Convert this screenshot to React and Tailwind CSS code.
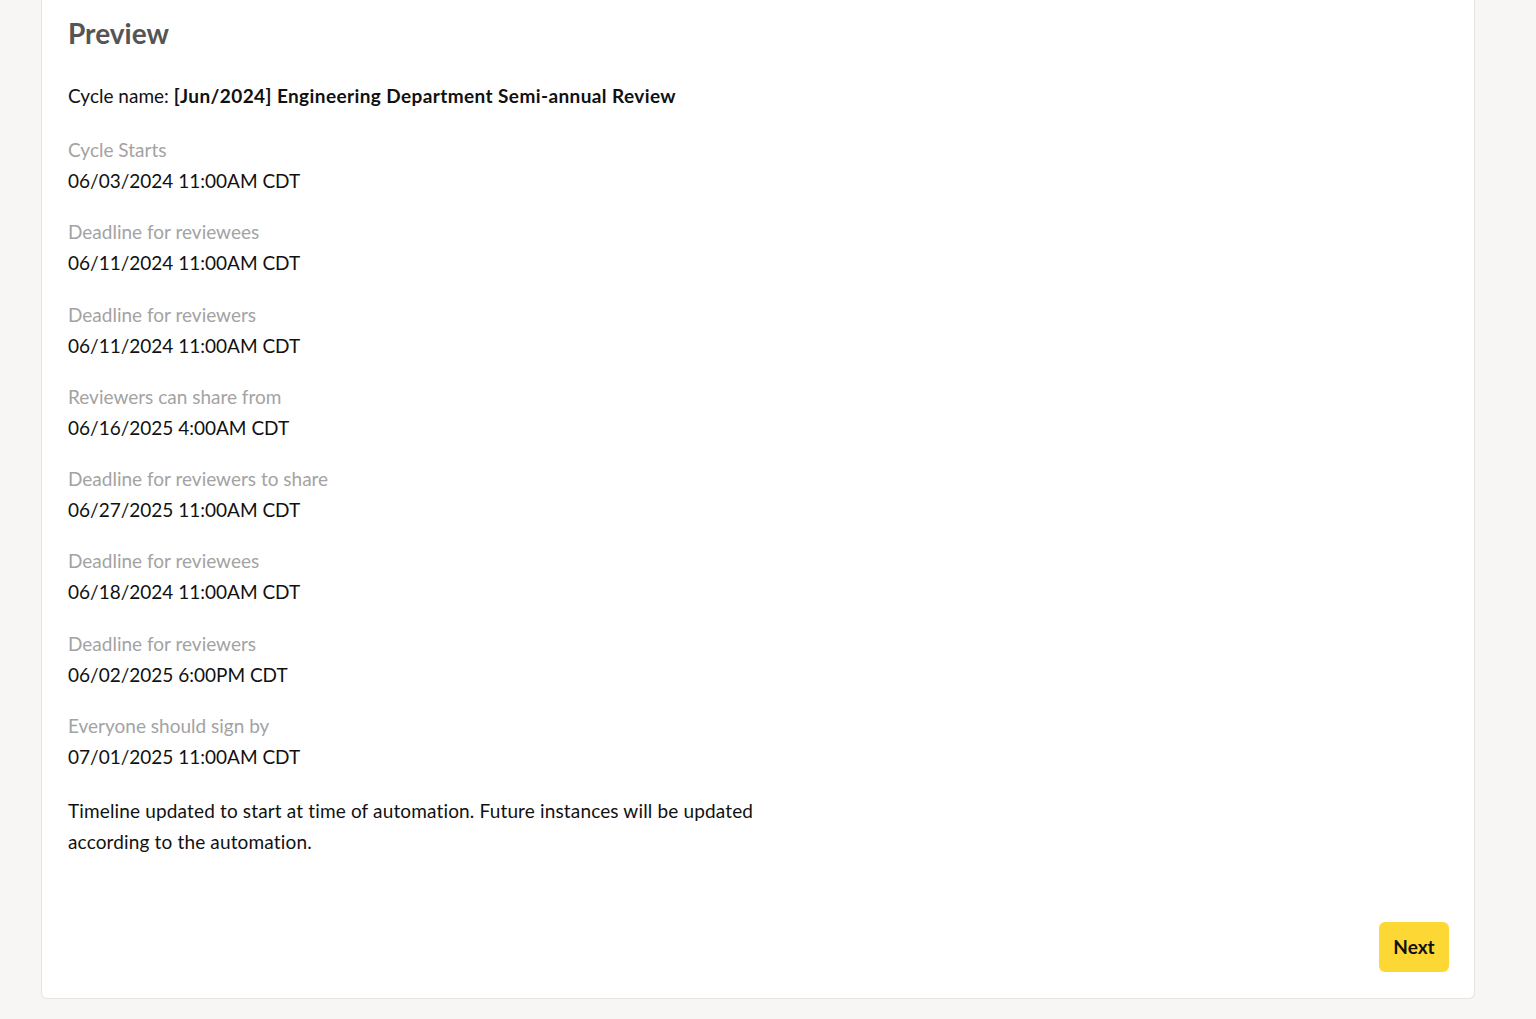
const rows = [
    { label: "Cycle Starts", value: "06/03/2024 11:00AM CDT" },
    { label: "Deadline for reviewees", value: "06/11/2024 11:00AM CDT" },
    { label: "Deadline for reviewers", value: "06/11/2024 11:00AM CDT" },
    { label: "Reviewers can share from", value: "06/16/2025 4:00AM CDT" },
    { label: "Deadline for reviewers to share", value: "06/27/2025 11:00AM CDT" },
    { label: "Deadline for reviewees", value: "06/18/2024 11:00AM CDT" },
    { label: "Deadline for reviewers", value: "06/02/2025 6:00PM CDT" },
    { label: "Everyone should sign by", value: "07/01/2025 11:00AM CDT" },
];

export default function App() {
    return (
        <div
            className="min-h-[1019px] bg-[#f7f6f4] pb-[21px]"
            style={{ fontFamily: "Lato, 'Noto Sans', sans-serif" }}
        >
            <div className="ml-[41px] w-[1434px] bg-white border border-t-0 border-[#e6e4e1] rounded-b-md pl-[26px] pr-[25px] pt-[13px] pb-[26px]">
                <h1 className="text-[28px] leading-[40px] font-bold text-[#555555]">Preview</h1>

                <p className="mt-[27px] text-[19px] leading-[31px] text-[#111111]">
                    Cycle name:{" "}
                    <span className="font-bold tracking-[0.4px]">[Jun/2024] Engineering Department Semi-annual Review</span>
                </p>

                <div className="mt-[23px] flex flex-col gap-[20.3px]">
                    {rows.map((r, i) => (
                        <div key={i}>
                            <div className="text-[19px] leading-[31px] text-[#a3a3a3]">{r.label}</div>
                            <div className="text-[19px] leading-[31px] text-[#111111]">{r.value}</div>
                        </div>
                    ))}
                </div>

                <p className="mt-[23px] w-[710px] text-[19px] leading-[31px] text-[#111111] tracking-[0.15px]">
                    Timeline updated to start at time of automation. Future instances will be updated according to the automation.
                </p>

                <div className="mt-[65px] flex justify-end">
                    <button className="h-[50px] w-[70px] rounded-md bg-[#fdd835] text-[19px] font-bold text-[#111111]">
                        Next
                    </button>
                </div>
            </div>
        </div>
    );
}
